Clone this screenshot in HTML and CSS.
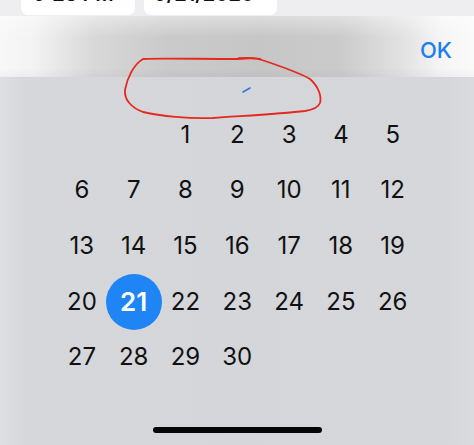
FILE: index.html
```html
<!DOCTYPE html>
<html>
<head>
<meta charset="utf-8">
<link rel="stylesheet" href="styles.css">
</head>
<body>
<div class="screen">
  <div class="fields">
    <div class="field time">9:28 PM</div>
    <div class="field date">9/21/2020</div>
  </div>
  <div class="toolbar"><span class="ok">OK</span></div>
  <div class="calendar">
    <div class="grid">
      <span></span><span></span>
      <span>1</span><span>2</span><span>3</span><span>4</span><span>5</span>
      <span>6</span><span>7</span><span>8</span><span>9</span><span>10</span><span>11</span><span>12</span>
      <span>13</span><span>14</span><span>15</span><span>16</span><span>17</span><span>18</span><span>19</span>
      <span>20</span><span class="sel"><b>21</b></span><span>22</span><span>23</span><span>24</span><span>25</span><span>26</span>
      <span>27</span><span>28</span><span>29</span><span>30</span>
    </div>
    <div class="home"></div>
  </div>
  <svg class="annot" width="474" height="445" viewBox="0 0 474 445">
    <path d="M143 59 C 150 58, 200 59, 238 59 C 248 58, 258 58, 262 60 C 280 66, 298 72, 310 79 C 318 86, 322 96, 320 103 C 318 108, 312 110, 305 111 C 280 114, 240 116, 213 118 C 190 119, 160 116, 143 112 C 132 108, 124 100, 125 90 C 127 78, 134 64, 143 59 Z" fill="none" stroke="#e5291f" stroke-width="1.8" stroke-linejoin="round"/>
    <path d="M238 58 C 248 57, 256 58, 261 59" fill="none" stroke="#e5291f" stroke-width="1.4"/>
    <path d="M243 92 L250 88" stroke="#3a6fe3" stroke-width="1.6" stroke-linecap="round"/>
  </svg>
</div>
</body>
</html>
```

FILE: styles.css
```css
html, body {
  margin: 0;
  padding: 0;
}
body {
  width: 474px;
  height: 445px;
  overflow: hidden;
  font-family: Inter, "Noto Sans", "Liberation Sans", sans-serif;
}
.screen {
  position: relative;
  width: 474px;
  height: 445px;
  display: flex;
  flex-direction: column;
  background: #d6d7db;
}
.fields {
  height: 16px;
  overflow: hidden;
  display: flex;
  background: #eeeef0;
  flex-shrink: 0;
}
.field {
  height: 40px;
  margin-top: -25px;
  background: #ffffff;
  border-radius: 7px;
  box-sizing: border-box;
  display: flex;
  align-items: flex-end;
  padding: 0 0 11px 12px;
  font-size: 20px;
  line-height: 1;
  font-weight: 600;
  color: #111;
}
.time {
  margin-left: 21px;
  width: 114px;
}
.date {
  margin-left: 9px;
  width: 133px;
  padding-left: 10px;
}
.toolbar {
  height: 61px;
  flex-shrink: 0;
  box-sizing: border-box;
  padding: 23px 22px 0 0;
  display: flex;
  justify-content: flex-end;
  align-items: flex-start;
  background:
    linear-gradient(180deg, rgba(255,255,255,0.4) 0%, rgba(255,255,255,0) 35%, rgba(0,0,0,0) 85%, rgba(0,0,0,0.03) 100%),
    linear-gradient(90deg, #f8f8f8 0%, #f3f3f3 7%, #d8d8d8 20%, #cacaca 35%, #c6c6c6 55%, #cbcbcb 72%, #e2e2e2 85%, #f5f5f5 93%, #fafafa 100%);
}
.ok {
  font-size: 22px;
  line-height: 1;
  font-weight: 500;
  color: #1a7ef2;
}
.calendar {
  flex: 1;
  display: flex;
  flex-direction: column;
  background: linear-gradient(90deg, #dedfe2 0%, #d6d7db 5%, #d5d6da 50%, #d6d7db 95%, #dadbde 100%);
}
.grid {
  margin: 30px 0 0 56px;
  display: grid;
  grid-template-columns: repeat(7, 51.8px);
  grid-auto-rows: 55.6px;
}
.grid span {
  display: flex;
  align-items: center;
  justify-content: center;
  font-size: 24px;
  line-height: 1;
  color: #111;
  font-weight: 400;
}
.grid .sel b {
  width: 56px;
  height: 56px;
  flex-shrink: 0;
  border-radius: 50%;
  background: #1f84f4;
  color: #fff;
  font-weight: 600;
  font-size: 26px;
  display: flex;
  align-items: center;
  justify-content: center;
}
.home {
  margin: 42px 0 0 153px;
  width: 169px;
  height: 6px;
  border-radius: 3px;
  background: #050505;
}
.annot {
  position: absolute;
  left: 0;
  top: 0;
  pointer-events: none;
}
```
